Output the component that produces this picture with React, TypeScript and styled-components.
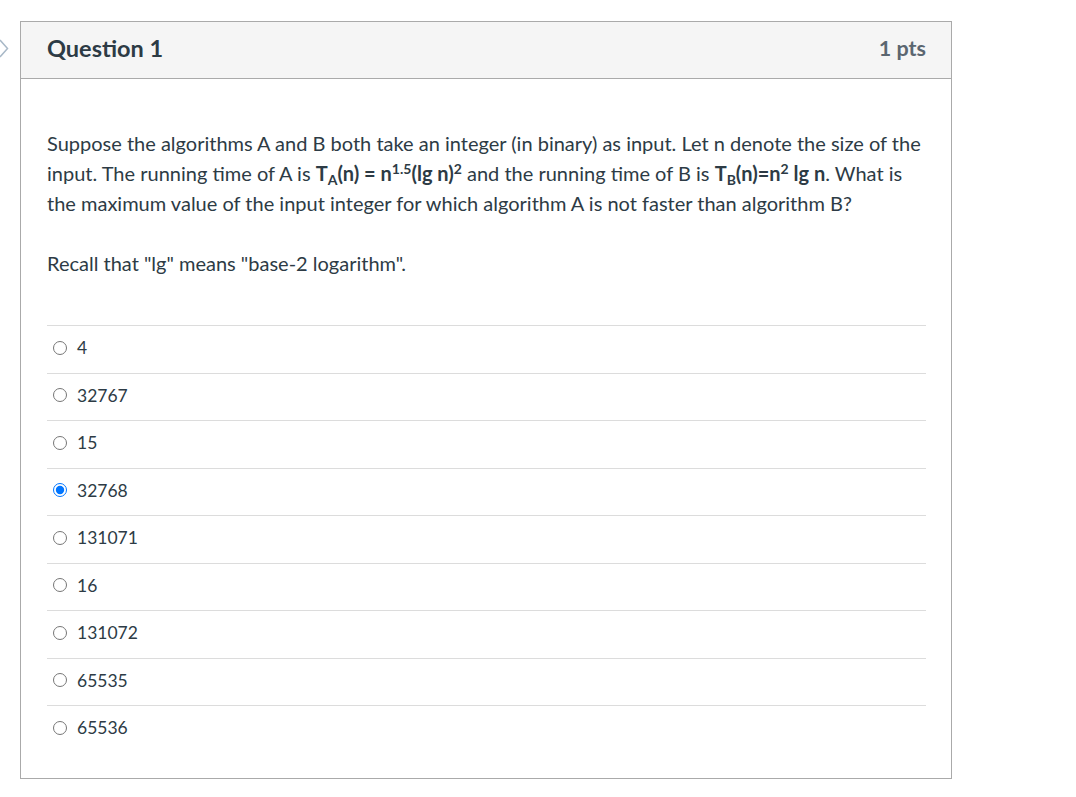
import React from "react";
import styled, { createGlobalStyle } from "styled-components";

const Global = createGlobalStyle`
  html, body { margin: 0; padding: 0; background: #fff; }
  body { font-family: Lato, "Open Sans", sans-serif; color: #2d3b45; }
`;

const Page = styled.div`
  display: flex;
  align-items: flex-start;
  padding-top: 21px;
`;

const Marker = styled.div`
  width: 20px;
  flex: none;
  padding-top: 18px;
  display: flex;
  justify-content: flex-start;
`;

const Card = styled.div`
  width: 930px;
  border: 1px solid #aaaaaa;
  box-sizing: content-box;
`;

const Header = styled.div`
  display: flex;
  justify-content: space-between;
  align-items: center;
  height: 56px;
  padding: 0 25px 0 26px;
  background: #f5f5f5;
  border-bottom: 1px solid #aaaaaa;
`;

const Title = styled.h2`
  margin: 0 0 4px;
  font-size: 23.5px;
  font-weight: 700;
  color: #2d3b45;
`;

const Points = styled.div`
  margin-bottom: 4px;
  font-size: 21.5px;
  font-weight: 700;
  color: #5b6670;
`;

const Body = styled.div`
  padding: 49px 25px 25px 26px;
`;

const Para = styled.p`
  margin: 0 0 30px;
  font-size: 20px;
  line-height: 30px;
  color: #2d3b45;
`;

const Sub = styled.sub`
  font-size: 14px;
  vertical-align: -4px;
  line-height: 0;
`;

const Sup = styled.sup`
  font-size: 14px;
  vertical-align: 7px;
  line-height: 0;
`;

const Answers = styled.div`
  margin-top: 47px;
  display: flex;
  flex-direction: column;
`;

const Row = styled.label`
  display: flex;
  align-items: center;
  box-sizing: border-box;
  height: 47.5px;
  padding-bottom: 3px;
  border-top: 1px solid #dcdcdc;
  font-family: Lato, sans-serif;
  font-size: 17.5px;
  color: #2d3b45;
`;

const Radio = styled.input`
  width: 14px;
  height: 14px;
  margin: 0 10px 0 6px;
  accent-color: #0075ff;
`;

const answers = ["4", "32767", "15", "32768", "131071", "16", "131072", "65535", "65536"];

export default function App() {
  return (
    <Page>
      <Global />
      <Marker>
        <svg width="10" height="20" viewBox="0 0 10 20">
          <path d="M0 1 L7.5 9.5 L0 18" fill="none" stroke="#a9b9c8" strokeWidth="1.5" />
        </svg>
      </Marker>
      <Card>
        <Header>
          <Title>Question 1</Title>
          <Points>1 pts</Points>
        </Header>
        <Body>
          <Para>
            Suppose the algorithms A and B both take an integer (in binary) as input. Let n denote the size of the
            input. The running time of A is <b>T<Sub>A</Sub>(n) = n<Sup>1.5</Sup>(lg n)<Sup>2</Sup></b> and the running
            time of B is <b>T<Sub>B</Sub>(n)=n<Sup>2</Sup> lg n</b>. What is the maximum value of the input integer for
            which algorithm A is not faster than algorithm B?
          </Para>
          <Para>Recall that "lg" means "base-2 logarithm".</Para>
          <Answers>
            {answers.map((a) => (
              <Row key={a}>
                <Radio type="radio" name="q1" defaultChecked={a === "32768"} />
                {a}
              </Row>
            ))}
          </Answers>
        </Body>
      </Card>
    </Page>
  );
}
